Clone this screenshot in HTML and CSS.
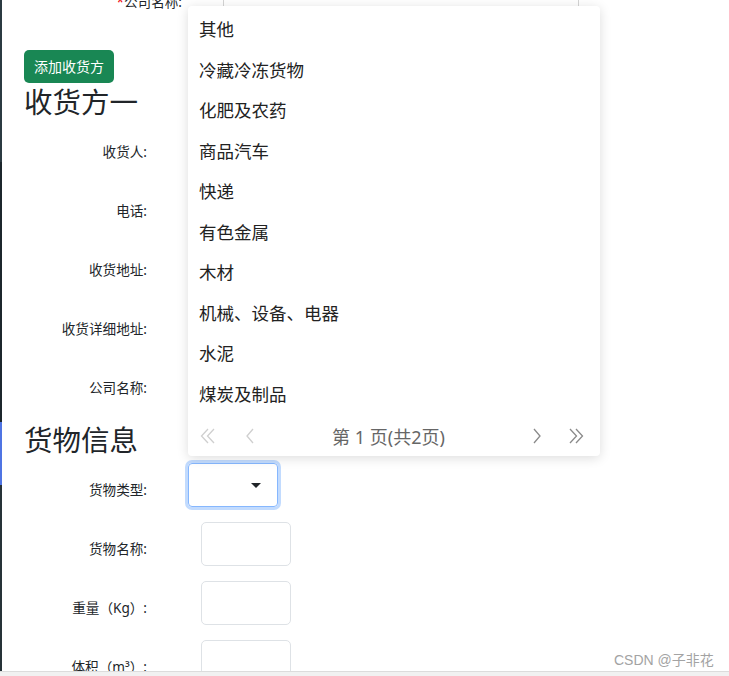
FILE: index.html
```html
<!DOCTYPE html>
<html lang="zh">
<head>
<meta charset="utf-8">
<title>form</title>
<link rel="stylesheet" href="styles.css">
</head>
<body>
<div class="app">
  <div class="body">
    <div class="sidebar">
      <div class="sb sb-a"></div>
      <div class="sb sb-b"></div>
      <div class="sb sb-active"></div>
      <div class="sb sb-c"></div>
    </div>
    <div class="main">
      <div class="row row-top">
        <label class="lbl lbl-wide"><span class="req">*</span>公司名称:</label>
        <div class="field field-wide"></div>
      </div>
      <button class="btn-add">添加收货方</button>
      <h2 class="sec">收货方一</h2>
      <div class="row"><label class="lbl">收货人:</label><div class="field"></div></div>
      <div class="row"><label class="lbl">电话:</label><div class="field"></div></div>
      <div class="row"><label class="lbl">收货地址:</label><div class="field"></div></div>
      <div class="row"><label class="lbl">收货详细地址:</label><div class="field"></div></div>
      <div class="row"><label class="lbl">公司名称:</label><div class="field"></div></div>
      <h2 class="sec sec-cargo">货物信息</h2>
      <div class="row"><label class="lbl">货物类型:</label>
        <div class="select"><span class="caret"></span></div>
      </div>
      <div class="row"><label class="lbl">货物名称:</label><div class="field"></div></div>
      <div class="row"><label class="lbl">重量（Kg）:</label><div class="field"></div></div>
      <div class="row"><label class="lbl">体积（m³）:</label><div class="field"></div></div>
    </div>
  </div>
  <div class="hscroll"></div>

  <div class="dropdown">
    <ul class="opts">
      <li>其他</li>
      <li>冷藏冷冻货物</li>
      <li>化肥及农药</li>
      <li>商品汽车</li>
      <li>快递</li>
      <li>有色金属</li>
      <li>木材</li>
      <li>机械、设备、电器</li>
      <li>水泥</li>
      <li>煤炭及制品</li>
    </ul>
    <div class="pager">
      <span class="pg pg-dis pg-first"><svg width="18" height="18" viewBox="0 0 18 18"><path d="M9 2 L2.5 9 L9 16 M15 2 L8.5 9 L15 16" fill="none" stroke="currentColor" stroke-width="1.3"/></svg></span>
      <span class="pg pg-dis"><svg width="12" height="18" viewBox="0 0 12 18"><path d="M9 2 L3 9 L9 16" fill="none" stroke="currentColor" stroke-width="1.3"/></svg></span>
      <span class="pg-text">第 1 页(共2页)</span>
      <span class="pg pg-next"><svg width="12" height="18" viewBox="0 0 12 18"><path d="M3 2 L9 9 L3 16" fill="none" stroke="currentColor" stroke-width="1.3"/></svg></span>
      <span class="pg"><svg width="18" height="18" viewBox="0 0 18 18"><path d="M3 2 L9.5 9 L3 16 M9 2 L15.5 9 L9 16" fill="none" stroke="currentColor" stroke-width="1.3"/></svg></span>
    </div>
  </div>

  <div class="watermark">CSDN @子非花</div>
</div>
</body>
</html>
```

FILE: styles.css
```css
html, body {
  margin: 0;
  padding: 0;
  background: #fff;
}
body {
  font-family: "Noto Sans", "Noto Sans CJK SC", sans-serif;
  color: #212529;
}
.app {
  position: relative;
  width: 729px;
  height: 676px;
  overflow: hidden;
  display: flex;
  flex-direction: column;
}
.body {
  display: flex;
  height: 671px;
  overflow: hidden;
}
.sidebar {
  width: 2px;
  display: flex;
  flex-direction: column;
  flex-shrink: 0;
}
.sb-a { height: 162px; background: #2b3a41; }
.sb-b { height: 260px; background: #1c262c; }
.sb-active { height: 63px; background: #4f74e3; }
.sb-c { flex: 1; background: #263238; }

.main {
  flex: 1;
  padding-left: 22px;
  display: flex;
  flex-direction: column;
  align-items: flex-start;
}
.row {
  display: flex;
  align-items: flex-start;
  margin-bottom: 15px;
}
.row-top {
  margin-top: -25px;
  margin-bottom: 31px;
}
.lbl {
  width: 123px;
  text-align: right;
  font-size: 13.6px;
  line-height: 20px;
  padding-top: 17px;
  color: #212529;
}
.lbl-wide {
  width: 158px;
}
.req { color: #e00; }
.field {
  width: 88px;
  height: 42px;
  border: 1px solid #dee2e6;
  border-radius: 5px;
  margin-left: 54px;
  background: #fff;
}
.field-wide {
  width: 354px;
  margin-left: 41px;
  border-color: #d4d4d4;
  border-radius: 3px;
}
.select {
  height: 42px;
  margin-left: 41px;
  border: 1px solid #86b7fe;
  border-radius: 4px;
  box-shadow: 0 0 0 3px rgba(13, 110, 253, 0.25);
  display: flex;
  align-items: center;
  justify-content: flex-end;
  padding-right: 16px;
  box-sizing: content-box;
  width: 72px;
}
.caret {
  width: 0;
  height: 0;
  border-left: 5px solid transparent;
  border-right: 5px solid transparent;
  border-top: 5px solid #212529;
}
.btn-add {
  font-family: "Noto Sans CJK SC", sans-serif;
  font-size: 14px;
  line-height: 21px;
  padding: 6px 10px;
  color: #fff;
  background: #198754;
  border: none;
  border-radius: 5px;
}
.sec {
  font-family: "Noto Sans CJK SC", sans-serif;
  font-weight: 400;
  font-size: 28.5px;
  line-height: 34px;
  padding-top: 1px;
  margin: 0 0 7px 0;
  color: #212529;
}
.sec-cargo {
  padding-top: 2px;
}

.hscroll {
  height: 4px;
  background: #f1f1f1;
  border-top: 1px solid #dcdcdc;
}

.dropdown {
  position: absolute;
  left: 188px;
  top: 6px;
  width: 412px;
  height: 450px;
  background: #fff;
  border-radius: 4px;
  box-shadow: 0 2px 12px rgba(0, 0, 0, 0.14);
  box-sizing: border-box;
  padding-top: 3px;
  display: flex;
  flex-direction: column;
}
.opts {
  list-style: none;
  margin: 0;
  padding: 0;
}
.opts li {
  height: 40.5px;
  line-height: 40.5px;
  padding-left: 11px;
  font-family: "Noto Sans CJK SC", sans-serif;
  font-size: 17.5px;
  color: #222;
}
.pager {
  flex: 1;
  display: flex;
  align-items: center;
  padding: 2px 15px 0 11px;
}
.pg {
  display: flex;
  align-items: center;
  color: #8a8a8a;
}
.pg-dis { color: #cfcfcf; }
.pg-first { margin-right: 27px; }
.pg-text {
  flex: 1;
  text-align: center;
  font-family: "Noto Sans", "Noto Sans CJK SC", sans-serif;
  font-size: 18px;
  color: #666;
  padding-right: 10px;
}
.pg-next { margin-right: 24px; }

.watermark {
  position: absolute;
  left: 614px;
  top: 650px;
  font-size: 14px;
  line-height: 20px;
  color: #a3a3a3;
  font-family: "Liberation Sans", "Noto Sans CJK SC", sans-serif;
}
```
